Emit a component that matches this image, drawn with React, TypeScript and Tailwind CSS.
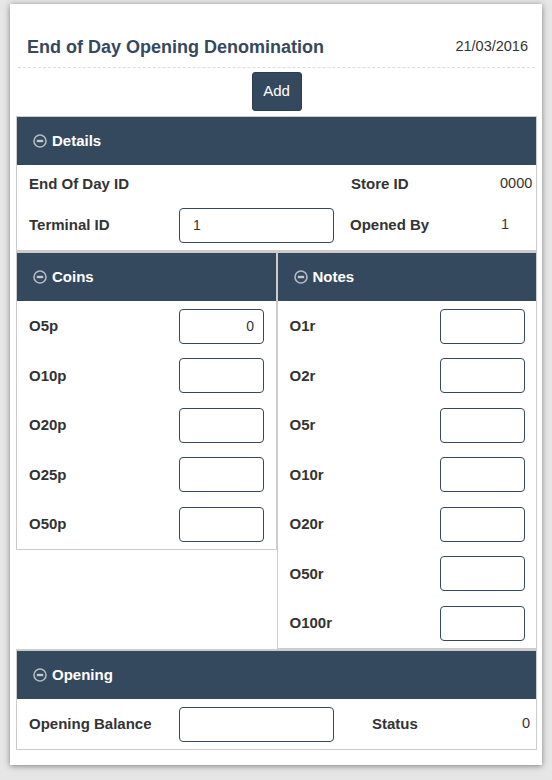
import React from "react"

const coins = ["O5p", "O10p", "O20p", "O25p", "O50p"]
const notes = ["O1r", "O2r", "O5r", "O10r", "O20r", "O50r", "O100r"]

function MinusCircle() {
  return (
    <svg width="14" height="14" viewBox="0 0 14 14" className="shrink-0">
      <circle cx="7" cy="7" r="6" fill="none" stroke="#b4bac2" strokeWidth="1.6" />
      <line x1="3.8" y1="7" x2="10.2" y2="7" stroke="#c2c7cd" strokeWidth="2.4" />
    </svg>
  )
}

function PanelHeader({ title }: { title: string }) {
  return (
    <div className="flex h-[48px] items-center gap-[5px] bg-[#34495e] pl-[16px] text-[15px] font-bold text-white">
      <MinusCircle />
      <span>{title}</span>
    </div>
  )
}

function Field({ value = "", className = "" }: { value?: string; className?: string }) {
  return (
    <input
      readOnly
      value={value}
      className={`h-[35px] rounded-[4px] border border-[#34495e] bg-white text-[14px] text-[#333] outline-none ${className}`}
    />
  )
}

function DenomPanel({ title, rows, first }: { title: string; rows: string[]; first?: string }) {
  return (
    <div className="w-1/2 border border-[#ccc]">
      <PanelHeader title={title} />
      <div className="flex flex-col gap-[14.5px] pt-[8px] pb-[7px] pl-[12px]">
        {rows.map((r, i) => (
          <div key={r} className="grid h-[35px] grid-cols-[150px_85px] items-center">
            <span className="text-[15px] font-bold text-[#333]">{r}</span>
            <Field value={i === 0 && first ? first : ""} className="w-[85px] pr-[9px] text-right" />
          </div>
        ))}
      </div>
    </div>
  )
}

export default function App() {
  return (
    <div className="min-h-[780px] bg-[#e6e6e6] pt-[4px] font-['Liberation_Sans',Arial,sans-serif]">
      <div className="ml-[10px] w-[532px] bg-white pt-[32px] pr-[5px] pb-[15px] pl-[6px] shadow-[0_1px_6px_rgba(0,0,0,0.45)]">
        <div className="mx-[2px] flex items-center justify-between border-b border-dashed border-[#ddd] pr-[7px] pb-[9px] pl-[9px]">
          <h1 className="text-[18px] leading-[20px] font-bold text-[#34495e]">End of Day Opening Denomination</h1>
          <span className="text-[14.5px] text-[#333]">21/03/2016</span>
        </div>

        <div className="flex justify-center pt-[4px]">
          <button className="h-[39px] w-[50px] rounded-[3px] border border-[#2c3e50] bg-[#34495e] text-[15px] text-white">
            Add
          </button>
        </div>

        <div className="mt-[5px] border border-b-2 border-[#ccc]">
          <PanelHeader title="Details" />
          <div className="flex flex-col gap-[6px] pt-[2px] pb-[7px] pl-[12px] text-[15px] text-[#333]">
            <div className="grid h-[35px] grid-cols-[150px_155px_166px_1fr] items-center">
              <span className="font-bold">End Of Day ID</span>
              <span />
              <span className="pl-[17px] font-bold">Store ID</span>
              <span className="text-[14.5px]">0000</span>
            </div>
            <div className="grid h-[35px] grid-cols-[150px_155px_166px_1fr] items-center">
              <span className="font-bold">Terminal ID</span>
              <Field value="1" className="w-[155px] pl-[13px]" />
              <span className="pl-[16px] font-bold">Opened By</span>
              <span className="pl-[1px] text-[14.5px]">1</span>
            </div>
          </div>
        </div>

        <div className="flex items-start">
          <DenomPanel title="Coins" rows={coins} first="0" />
          <DenomPanel title="Notes" rows={notes} />
        </div>

        <div className="border border-t-2 border-[#ccc]">
          <PanelHeader title="Opening" />
          <div className="pt-[8px] pb-[7px] pl-[12px] pr-[6px] text-[15px] text-[#333]">
            <div className="grid h-[35px] grid-cols-[150px_155px_1fr_auto] items-center">
              <span className="font-bold">Opening Balance</span>
              <Field className="w-[155px] pl-[13px]" />
              <span className="pl-[38px] font-bold">Status</span>
              <span className="text-[14.5px]">0</span>
            </div>
          </div>
        </div>
      </div>
    </div>
  )
}
